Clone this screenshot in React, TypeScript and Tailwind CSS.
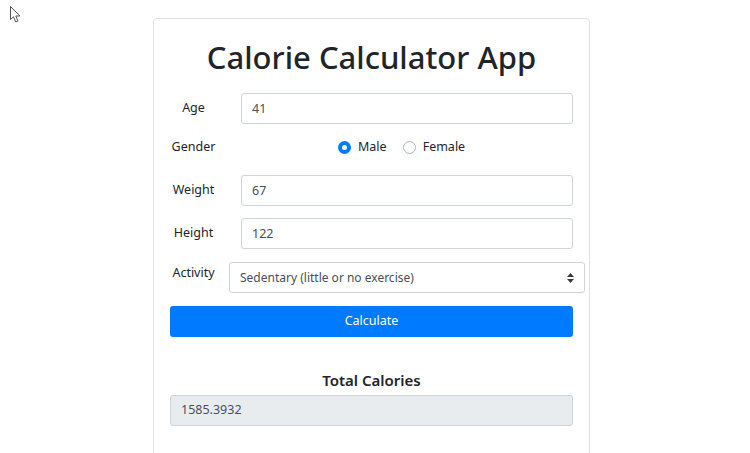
import { useState } from 'react'

const font = { fontFamily: '"Noto Sans", "Open Sans", sans-serif' }

function Cursor() {
  return (
    <svg className="absolute left-[10px] top-[6px]" width="12" height="17" viewBox="0 0 12 17">
      <path
        d="M0.5 0.5 L0.5 13.5 L3.5 10.8 L5.8 16 L8 15 L5.8 10 L10 10 Z"
        fill="white"
        stroke="#555"
        strokeWidth="1"
        strokeLinejoin="round"
      />
    </svg>
  )
}

function Row({ label, value }: { label: string; value: string }) {
  return (
    <div className="flex items-center h-[31px]">
      <div className="w-[71px] text-center pr-[24px] text-[12.5px] text-[#212529]">{label}</div>
      <input
        readOnly
        value={value}
        className="flex-1 h-[31px] border border-[#ced4da] rounded-[3px] px-[10px] text-[12.5px] text-[#495057] bg-white outline-none"
      />
    </div>
  )
}

function Radio({ checked, label, onClick }: { checked: boolean; label: string; onClick: () => void }) {
  return (
    <button onClick={onClick} className="flex items-center">
      <span
        className={
          checked
            ? 'w-[13px] h-[13px] rounded-full bg-[#007bff] flex items-center justify-center'
            : 'w-[13px] h-[13px] rounded-full border border-[#adb5bd] bg-white'
        }
      >
        {checked && <span className="w-[5px] h-[5px] rounded-full bg-white" />}
      </span>
      <span className="ml-[7px]">{label}</span>
    </button>
  )
}

export default function App() {
  const [gender, setGender] = useState<'male' | 'female'>('male')

  return (
    <div className="relative h-[453px] overflow-hidden bg-white" style={font}>
      <Cursor />
      <div className="pl-[153px] pt-[18px]">
        <div className="w-[437px] h-[460px] border border-[#e2e2e2] rounded-[4px] px-[16px] pt-[19px]">
          <h1 className="text-center text-[31px] leading-[38px] font-medium text-[#212529]">
            Calorie Calculator App
          </h1>

          <div className="mt-[17px]">
            <Row label="Age" value="41" />
          </div>

          <div className="mt-[12px] flex items-center h-[22px]">
            <div className="w-[47px] text-center text-[12.5px] text-[#212529]">Gender</div>
            <div className="flex items-center ml-[121px] text-[12.5px] text-[#212529]">
              <Radio checked={gender === 'male'} label="Male" onClick={() => setGender('male')} />
              <div className="ml-[16px]">
                <Radio checked={gender === 'female'} label="Female" onClick={() => setGender('female')} />
              </div>
            </div>
          </div>

          <div className="mt-[17px]">
            <Row label="Weight" value="67" />
          </div>
          <div className="mt-[12px]">
            <Row label="Height" value="122" />
          </div>

          <div className="mt-[13px] flex items-start">
            <div className="w-[59px] shrink-0 pt-[2px] pr-[12px] text-center text-[12.5px] text-[#212529]">Activity</div>
            <div className="relative shrink-0 w-[356px] h-[31px] border border-[#ced4da] rounded-[3px] bg-white flex items-center px-[10px] text-[12px] text-[#495057]">
              Sedentary (little or no exercise)
              <svg className="absolute right-[10px] top-[10px]" width="7" height="10" viewBox="0 0 7 10">
                <path d="M3.5 0 L7 4 L0 4 Z M3.5 10 L0 6 L7 6 Z" fill="#343a40" />
              </svg>
            </div>
          </div>

          <button className="mt-[13px] w-full h-[31px] rounded-[3px] bg-[#007bff] text-white text-[12.5px]">
            Calculate
          </button>

          <div className="mt-[33px] text-center text-[15px] leading-[20px] font-semibold text-[#212529]">
            Total Calories
          </div>
          <div className="mt-[5px] h-[31px] border border-[#ced4da] rounded-[3px] bg-[#e9ecef] flex items-center px-[10px] text-[12.5px] text-[#495057]">
            1585.3932
          </div>
        </div>
      </div>
    </div>
  )
}
